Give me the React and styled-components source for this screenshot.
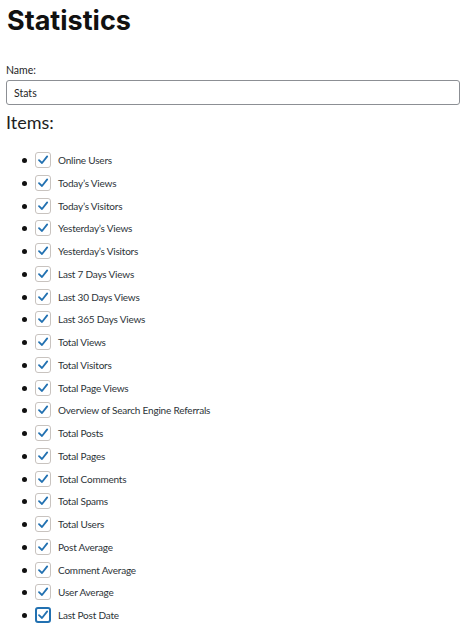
import React from "react";
import styled, { createGlobalStyle } from "styled-components";

const GlobalStyle = createGlobalStyle`
  body {
    margin: 0;
    background: #fff;
    color: #1e1e1e;
    font-family: Lato, "Noto Sans", sans-serif;
  }
`;

const Page = styled.div`
  padding: 0 6px;
`;

const Title = styled.h1`
  font-family: Inter, sans-serif;
  font-weight: 700;
  font-size: 27px;
  line-height: 27px;
  margin: 7px 0 29px 1px;
  color: #111;
`;

const Label = styled.label`
  display: block;
  font-size: 10.5px;
  line-height: 14px;
  margin-bottom: 3px;
`;

const Input = styled.input`
  box-sizing: border-box;
  width: 100%;
  height: 25px;
  border: 1px solid #8c8f94;
  border-radius: 3px;
  padding: 0 7px;
  font-family: inherit;
  font-size: 10.5px;
  color: #1e1e1e;
  outline: none;
`;

const SubTitle = styled.h3`
  font-weight: 400;
  font-size: 18px;
  line-height: 24px;
  margin: 5px 0 18px 0;
`;

const List = styled.ul`
  margin: 0;
  padding: 0 0 0 16px;
  list-style: none;
`;

const Item = styled.li`
  height: 22.75px;
  font-size: 10px;
  letter-spacing: -0.2px;
  color: #2c3338;
  display: flex;
  align-items: flex-start;
  &::before {
    content: "";
    width: 5px;
    height: 5px;
    border-radius: 50%;
    background: #111;
    margin: 6px 8px 0 0;
    flex: none;
  }
`;

const Row = styled.label`
  display: inline-flex;
  align-items: center;
  gap: 7px;
`;

const Box = styled.span`
  box-sizing: border-box;
  width: 16px;
  height: 16px;
  border-radius: 3px;
  border: ${(p) => (p.$focus ? "2px solid #2271b1" : "1px solid #c8c3bf")};
  display: flex;
  align-items: center;
  justify-content: center;
  background: #fff;
`;

const items = [
  "Online Users",
  "Today's Views",
  "Today's Visitors",
  "Yesterday's Views",
  "Yesterday's Visitors",
  "Last 7 Days Views",
  "Last 30 Days Views",
  "Last 365 Days Views",
  "Total Views",
  "Total Visitors",
  "Total Page Views",
  "Overview of Search Engine Referrals",
  "Total Posts",
  "Total Pages",
  "Total Comments",
  "Total Spams",
  "Total Users",
  "Post Average",
  "Comment Average",
  "User Average",
  "Last Post Date",
];

const Check = () => (
  <svg width="12" height="12" viewBox="0 0 12 12">
    <path d="M2 6.2 L5 9 L10.2 2.4" fill="none" stroke="#2271b1" strokeWidth="1.8" strokeLinecap="round" strokeLinejoin="round" />
  </svg>
);

export default function App() {
  return (
    <Page>
      <GlobalStyle />
      <Title>Statistics</Title>
      <Label>Name:</Label>
      <Input defaultValue="Stats" />
      <SubTitle>Items:</SubTitle>
      <List>
        {items.map((it, i) => (
          <Item key={it}>
            <Row>
              <Box $focus={i === items.length - 1}>
                <Check />
              </Box>
              {it.replace("'", "\u2019")}
            </Row>
          </Item>
        ))}
      </List>
    </Page>
  );
}
